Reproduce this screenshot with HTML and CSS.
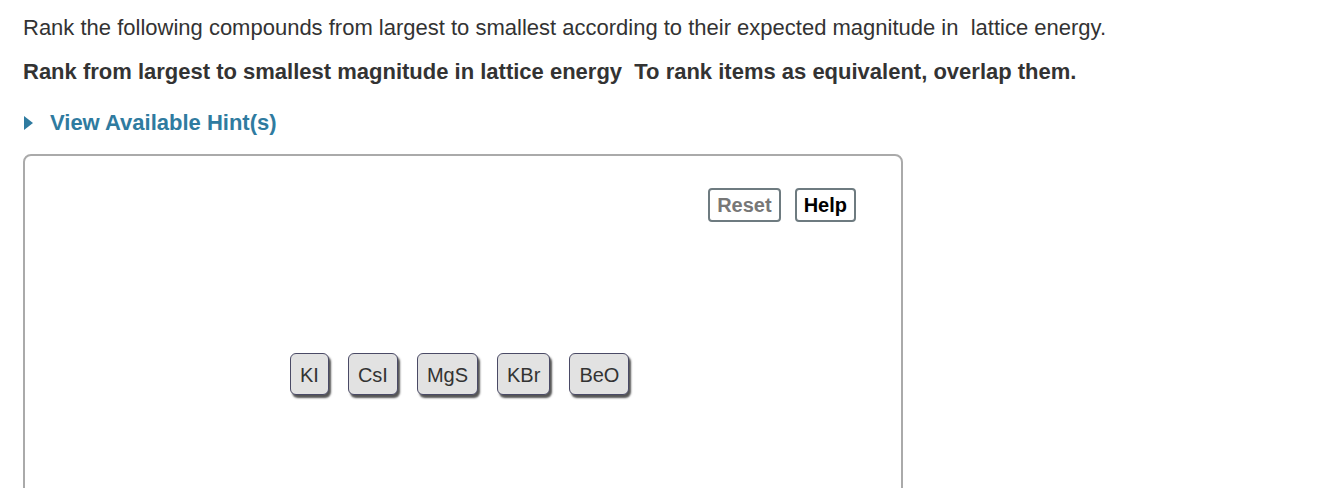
FILE: index.html
```html
<!DOCTYPE html>
<html lang="en">
<head>
    <meta charset="UTF-8">
    <title>Ranking</title>
    <link rel="stylesheet" href="styles.css">
</head>
<body>
    <div class="question">
        <p class="prompt">Rank the following compounds from largest to smallest according to their expected magnitude in &nbsp;lattice energy.</p>
        <p class="instructions">Rank from largest to smallest magnitude in lattice energy &nbsp;To rank items as equivalent, overlap them.</p>
        <div class="hint-toggle">
            <span class="arrow"></span>
            <span class="hint-label">View Available Hint(s)</span>
        </div>
        <div class="rank-box">
            <div class="toolbar">
                <button class="tool-btn reset">Reset</button>
                <button class="tool-btn help">Help</button>
            </div>
            <div class="tiles">
                <div class="tile">KI</div>
                <div class="tile">CsI</div>
                <div class="tile">MgS</div>
                <div class="tile">KBr</div>
                <div class="tile">BeO</div>
            </div>
        </div>
    </div>
</body>
</html>
```

FILE: styles.css
```css
body {
    margin: 0;
    font-family: 'Liberation Sans', Arial, sans-serif;
    color: #333;
    background: #fff;
}
.question {
    padding: 14px 23px 0;
}
.prompt {
    font-size: 22px;
    margin: 0 0 16px;
    line-height: 28px;
}
.instructions {
    font-size: 22px;
    font-weight: bold;
    margin: 0 0 23px;
    line-height: 28px;
}
.hint-toggle {
    display: flex;
    align-items: center;
    gap: 17px;
    height: 28px;
    margin-bottom: 17px;
}
.arrow {
    width: 0;
    height: 0;
    border-left: 9px solid #2f7ba0;
    border-top: 7px solid transparent;
    border-bottom: 7px solid transparent;
    margin-left: 1px;
}
.hint-label {
    font-size: 22px;
    font-weight: bold;
    color: #2f7ba0;
}
.rank-box {
    width: 880px;
    height: 360px;
    border: 2px solid #aaa;
    border-radius: 8px;
    box-sizing: border-box;
}
.toolbar {
    display: flex;
    justify-content: flex-end;
    gap: 14px;
    padding: 32px 45px 0 0;
}
.tool-btn {
    font-family: 'Liberation Sans', Arial, sans-serif;
    font-size: 20px;
    font-weight: bold;
    background: #fff;
    border: 2px solid #6e7b80;
    border-radius: 4px;
    padding: 0 7px;
    height: 34px;
}
.reset {
    color: #777;
}
.help {
    color: #000;
}
.tiles {
    display: flex;
    gap: 19px;
    padding: 131px 0 0 265px;
}
.tile {
    font-size: 20px;
    height: 42px;
    line-height: 42px;
    padding: 0 9px;
    background: #e2e2e2;
    border: 1px solid #4a4a66;
    border-radius: 6px;
    box-shadow: 2px 3px 2px #555;
    box-sizing: border-box;
}
```
